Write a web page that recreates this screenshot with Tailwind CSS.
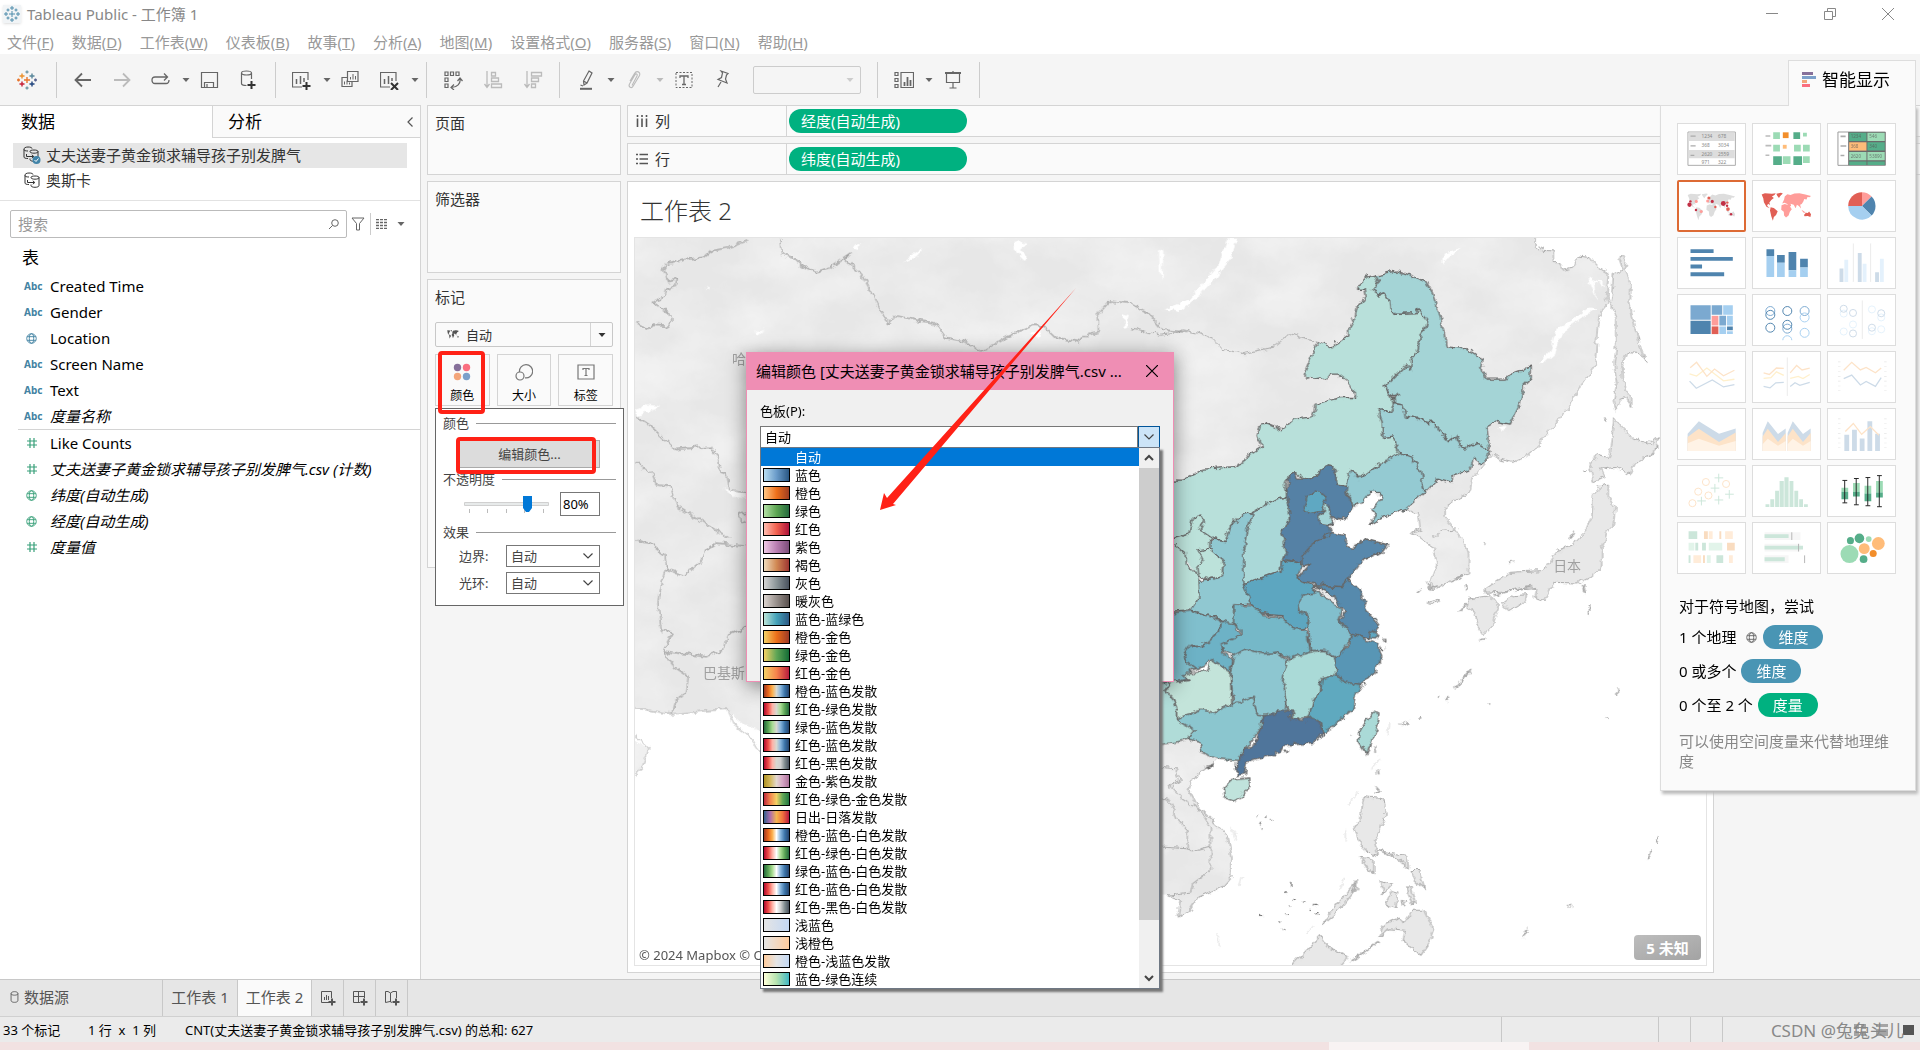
<!DOCTYPE html>
<html lang="zh-CN">
<head>
  <meta charset="UTF-8">
  <title>Tableau Public - 工作簿 1</title>
  <script src="https://cdn.jsdelivr.net/npm/@tailwindcss/browser@4"></script>
</head>
<body class="relative h-screen flex flex-col overflow-hidden bg-[#f5f5f5] text-[15px] leading-5 text-[#333] font-['Noto_Sans','Noto_Sans_CJK_SC',sans-serif]">

  <!-- Shared icons -->
  <svg class="hidden">
    <symbol id="caret" viewBox="0 0 8 8"><path d="M0.500 2h7L4 6z" fill="currentColor"/></symbol>
    <symbol id="chevron" viewBox="0 0 12 12"><path d="M1.500 3.500 6 8l4.500-4.500" fill="none" stroke="currentColor" stroke-width="1.200"/></symbol>
    <symbol id="globe" viewBox="0 0 12 12">
      <g fill="none" stroke="currentColor"><circle cx="6" cy="6" r="5.200"/><ellipse cx="6" cy="6" rx="2.400" ry="5.200"/><path d="M1.200 4h9.600M1.200 8h9.600"/></g>
    </symbol>
    <symbol id="hash" viewBox="0 0 12 12"><path d="M4 1v10M8 1v10M1 4h10M1 8h10" fill="none" stroke="currentColor" stroke-width="1.200"/></symbol>
    <symbol id="source" viewBox="0 0 16 16">
      <g fill="none" stroke="currentColor"><path d="M5 12.500C2.500 12.500 1 12 1 11V3c0-1 1.500-2 4-2s4 .6 4 1.500"/><path d="M1 3.500C1 4.500 2.500 5 5 5"/><path d="M7 5.500C7 4.500 8.500 4 11 4s4 .6 4 1.500v8c0 1-1.500 1.800-4 1.800s-4-.8-4-1.800v-1M7 5.500c0 1 1.500 1.700 4 1.700s4-.7 4-1.700"/><path d="M3.500 8v2.500h7M8.800 8.800l2 1.700-2 1.700"/></g>
    </symbol>
    <symbol id="ticks" viewBox="0 0 207 156"><path d="M34 30v100M178 30v100" stroke="#e6e6e6" stroke-width="8" stroke-dasharray="2 13" fill="none"/></symbol>
    <symbol id="americas" viewBox="0 0 207 156">
      <path d="M26 42l10-4 22 2 12-2-4 6-8 4 6 5-8 6-6 8 2 8-6-4-3 6 8 8-10-5-8-14-2-12zM72 40l14-3 6 2-8 8-4 6-6-8zM54 82l10 2 12 10-5 12-7 6-3 12-5-14-4-18zM158 106l6-7 6 1 4-5 6 9-2 8-8-3-10 1z"/>
    </symbol>
    <symbol id="eurasia" viewBox="0 0 207 156">
      <path d="M92 66l4-8 2-10 8-7 10 3 12-5 16-1 18 4 18 5-5 4-6-1-3 8-7-2-3 8-5 8-5 2 3 12-7-8-6-4-4 11-6-11-10-3 2 6-6 4-6-9-9-4-7 2zM88 76l10-4 14 4 8 12-6 8-4 12-8 6-6-6-1-12-8-6zM150 90l8 4 6 6-8-2z"/>
    </symbol>
  </svg>

  <!-- Title bar -->
  <header class="flex h-7 items-center bg-white text-[#888]">
    <svg class="ml-[3px] mr-1.5 size-[18px] bg-[#f1f4f6] shadow" viewBox="0 0 18 18"><path d="M9 6v6M6 9h6M9 1v4M7 3h4M9 13v4M7 15h4M3 7v4M1 9h4M15 7v4M13 9h4M5 3.500v3M3.500 5h3M13 3.500v3M11.500 5h3M5 11.500v3M3.500 13h3M13 11.500v3M11.500 13h3" stroke="#4f8cab" fill="none"/></svg>
    <h1 class="flex-1">Tableau Public - 工作簿 1</h1>
    <button aria-label="最小化" class="flex w-[58px] justify-center"><svg class="size-3" viewBox="0 0 12 12"><path d="M0 5.500h12" stroke="currentColor"/></svg></button>
    <button aria-label="还原" class="flex w-[58px] justify-center"><svg class="size-3" viewBox="0 0 12 12"><path d="M.5 3.500h8v8h-8zM3.500 3.500v-3h8v8h-3" fill="none" stroke="currentColor"/></svg></button>
    <button aria-label="关闭" class="mr-[3px] flex w-[58px] justify-center"><svg class="size-3" viewBox="0 0 12 12"><path d="M0 0l12 12M12 0L0 12" stroke="currentColor"/></svg></button>
  </header>

  <!-- Menu -->
  <nav class="flex h-[26px] items-center gap-[18px] bg-white pl-[7px] pt-px text-[#999]">
    <a href="#">文件(<u>F</u>)</a>
    <a href="#">数据(<u>D</u>)</a>
    <a href="#">工作表(<u>W</u>)</a>
    <a href="#">仪表板(<u>B</u>)</a>
    <a href="#">故事(<u>T</u>)</a>
    <a href="#">分析(<u>A</u>)</a>
    <a href="#">地图(<u>M</u>)</a>
    <a href="#">设置格式(<u>O</u>)</a>
    <a href="#">服务器(<u>S</u>)</a>
    <a href="#">窗口(<u>N</u>)</a>
    <a href="#">帮助(<u>H</u>)</a>
  </nav>

  <!-- Toolbar -->
  <div class="flex h-[51px] items-center pl-[17px] text-[#666]">
    <button aria-label="起始页"><svg class="size-5" viewBox="0 0 20 20" fill="none" stroke-width="1.400"><path d="M10 7v6M7 10h6" stroke="#e8762d"/><path d="M5 3.500v5M2.500 6h5" stroke="#eb912c"/><path d="M15 3.500v5M12.500 6h5" stroke="#59879b"/><path d="M5 11.500v5M2.500 14h5" stroke="#c72037"/><path d="M15 11.500v5M12.500 14h5" stroke="#1f447e"/><path d="M10 .5v3M8.500 2h3" stroke="#7199a6"/><path d="M10 16.500v3M8.500 18h3" stroke="#7199a6"/><path d="M1.500 8.500v3M0 10h3" stroke="#e8762d"/><path d="M18.500 8.500v3M17 10h3" stroke="#5b6591"/></svg></button>
    <span class="ml-[19px] mr-4 h-9 w-px bg-[#ccc]"></span>
    <div class="flex items-center gap-[19px]">
      <button aria-label="撤消"><svg class="size-5" viewBox="0 0 20 20"><path d="M18 10H3M9 3.500 2.500 10 9 16.500" fill="none" stroke="currentColor" stroke-width="1.800"/></svg></button>
      <button aria-label="重做" class="text-[#bbb]"><svg class="size-5" viewBox="0 0 20 20"><path d="M2 10h15M11 3.500l6.500 6.500-6.500 6.500" fill="none" stroke="currentColor" stroke-width="1.800"/></svg></button>
      <div class="-mr-[9px] flex items-center gap-[11px]">
        <button aria-label="重播"><svg class="size-5" viewBox="0 0 20 20"><path d="M16 7H4c-2 0-3 1-3 3s1 3.500 3 3.500h11c2 0 3-1.200 3-3.500M13 3.500 16.500 7 13 10.500" fill="none" stroke="currentColor" stroke-width="1.300"/></svg></button>
        <button aria-label="更多重播"><svg class="size-2"><use href="#caret"/></svg></button>
      </div>
      <button aria-label="保存"><svg class="size-5" viewBox="0 0 20 20"><path d="M1.500 2.500h16v15h-16zM4.500 17.500v-5h9v5M7 14v3.500" fill="none" stroke="currentColor" stroke-width="1.200"/></svg></button>
      <button aria-label="新建数据源"><svg class="size-5" viewBox="0 0 20 20"><path d="M7.500 15.500c-3.500 0-5-.8-5-2V3c0-1.200 2-2 5-2s5 .8 5 2v6M2.500 3c0 1.200 2 2 5 2s5-.8 5-2" fill="none" stroke="currentColor" stroke-width="1.200"/><path d="M12.500 11v8M8.500 15h8" stroke="#333" stroke-width="2"/></svg></button>
    </div>
    <span class="mx-4 h-9 w-px bg-[#ccc]"></span>
    <div class="flex items-center gap-[19px]">
      <div class="-mr-[9px] flex items-center gap-[11px]">
        <button aria-label="新建工作表"><svg class="size-5" viewBox="0 0 20 20"><path d="M10 17H.5V2.500H16V10" fill="none" stroke="currentColor" stroke-width="1.200"/><path d="M4.500 14V9M8.500 14V6M12 12V8" stroke="currentColor" stroke-width="1.500"/><path d="M14.500 12v8M10.500 16h8" stroke="#333" stroke-width="2"/></svg></button>
        <button aria-label="更多新建选项"><svg class="size-2"><use href="#caret"/></svg></button>
      </div>
      <button aria-label="复制工作表"><svg class="size-5" viewBox="0 0 20 20"><path d="M6.500 1.500H17v10H6.500zM6.500 7.500H1v9h10v-5" fill="none" stroke="currentColor" stroke-width="1.200"/><path d="M9.500 9.500V7M12 9.500V4M14.500 9.500V6M3.500 14.500v-3M6 14.500v-4M8.500 14.500v-2" stroke="currentColor"/></svg></button>
      <div class="-mr-[9px] flex items-center gap-[11px]">
        <button aria-label="清除工作表"><svg class="size-5" viewBox="0 0 20 20"><path d="M10 17H.5V2.500H16V11" fill="none" stroke="currentColor" stroke-width="1.200"/><path d="M4.500 14V9M8.500 14V6M12 11V8" stroke="currentColor" stroke-width="1.500"/><path d="M11 13l7 7M18 13l-7 7" stroke="#333" stroke-width="2"/></svg></button>
        <button aria-label="更多清除选项"><svg class="size-2"><use href="#caret"/></svg></button>
      </div>
    </div>
    <span class="mx-4 h-9 w-px bg-[#ccc]"></span>
    <div class="flex items-center gap-5">
      <button aria-label="交换行和列"><svg class="size-5" viewBox="0 0 20 20" fill="none" stroke="currentColor" stroke-width="1.200"><path d="M2 2h3v3.500H2zM7.500 2h3v3.500h-3zM13 2h3v3.500h-3zM2 8h3v3.500H2zM2 14h3v3.500H2zM17 8.500c1 5-3 9-8.500 9M14.500 11 17 8l2.500 3M11 14.500l-3 3 3 2.500"/></svg></button>
      <button aria-label="升序排序" class="text-[#bbb]"><svg class="size-5" viewBox="0 0 20 20" fill="none" stroke="currentColor" stroke-width="1.300"><path d="M4 1v16M1.500 14 4 17.500 6.500 14M8.500 2.500h4v3.500h-4zM8.500 8h7v3.500h-7zM8.500 14h10v3.500h-10z"/></svg></button>
      <button aria-label="降序排序" class="text-[#bbb]"><svg class="size-5" viewBox="0 0 20 20" fill="none" stroke="currentColor" stroke-width="1.300"><path d="M4 1v16M1.500 14 4 17.500 6.500 14M8.500 2.500h10v3.500h-10zM8.500 8h7v3.500h-7zM8.500 14h4v3.500h-4z"/></svg></button>
    </div>
    <span class="mx-4 h-9 w-px bg-[#ccc]"></span>
    <div class="flex items-center gap-[19px]">
      <div class="-mr-[9px] flex items-center gap-[11px]">
        <button aria-label="突出显示"><svg class="size-5" viewBox="0 0 20 20" fill="none" stroke="currentColor" stroke-width="1.200"><path d="M13 1l3 2-5 10-3 2-.5-4zM7.500 11l3.500 2M4.500 15l2.500 1"/><path d="M4 18.800h12" stroke-width="2"/></svg></button>
        <button aria-label="更多突出显示"><svg class="size-2"><use href="#caret"/></svg></button>
      </div>
      <div class="-mr-[9px] flex items-center gap-[11px] text-[#bbb]">
        <button aria-label="分组"><svg class="size-5" viewBox="0 0 20 20"><path d="M7 15.500 12 6c1-2-1.200-3-2.200-1L4.500 14c-1.500 3 2 5 3.700 2L14.500 5.500c1.500-3.500-3-5.500-5-2L5 11" fill="none" stroke="currentColor" stroke-width="1.100"/></svg></button>
        <button aria-label="更多分组"><svg class="size-2"><use href="#caret"/></svg></button>
      </div>
      <button aria-label="显示标记标签"><svg class="size-5" viewBox="0 0 20 20" fill="none" stroke="currentColor"><path d="M2 2.500h16v15H2z" stroke-dasharray="2 1.500"/><path d="M6 8V6h8v2M10 6v8.500M8 14.500h4" stroke-width="1.300"/></svg></button>
      <button aria-label="固定轴"><svg class="size-5" viewBox="0 0 20 20"><path d="M8 1l7 2.500-1.500 1.500-1 4 1.500 4-9-3.500 3.500-2L9.500 3zM8 12l-3 5" fill="none" stroke="currentColor" stroke-width="1.200"/></svg></button>
    </div>
    <select aria-label="适合" disabled class="ml-5 h-7 w-[108px] appearance-none rounded-xs border border-[#ccc]"></select>
    <svg class="-ml-[15px] mr-[7px] size-2 text-[#ccc]"><use href="#caret"/></svg>
    <span class="mx-4 h-9 w-px bg-[#ccc]"></span>
    <div class="flex items-center gap-[19px]">
      <div class="-mr-[9px] flex items-center gap-[11px]">
        <button aria-label="显示/隐藏卡"><svg class="size-5" viewBox="0 0 20 20" fill="none" stroke="currentColor" stroke-width="1.200"><path d="M1 2.500h3v3H1zM1 8.500h3v3H1zM1 14.500h3v3H1zM7 2.500h12.500v15H7z"/><path d="M10.500 16v-4M13.500 16V7M16.500 16v-6" stroke-width="1.800"/></svg></button>
        <button aria-label="更多卡"><svg class="size-2"><use href="#caret"/></svg></button>
      </div>
      <button aria-label="演示模式"><svg class="size-5" viewBox="0 0 20 20" fill="none" stroke="currentColor" stroke-width="1.200"><path d="M2 3h16" stroke-width="2"/><path d="M3.500 3v9.500h13V3M10 1v2M10 12.500V18M6.500 18h7"/></svg></button>
    </div>
    <span class="mx-4 h-9 w-px bg-[#ccc]"></span>
  </div>

  <main class="flex min-h-0 flex-1">
    <!-- Data pane -->
    <aside class="w-[421px] shrink-0 border-r border-t border-[#d4d4d4] bg-white">
      <div class="flex h-8 text-[17px] leading-6 text-black">
        <button class="w-[212px] pl-[21px] text-left">数据</button>
        <button class="flex flex-1 items-center justify-between border-b border-l border-[#d4d4d4] bg-[#fafafa] pl-[15px] pr-1">分析
          <svg class="size-3 rotate-90 text-[#555]"><use href="#chevron"/></svg></button>
      </div>
      <ul class="mt-[5px] h-[58px] border-b border-[#e2e2e2] pl-[13px]">
        <li class="flex h-[25px] w-[394px] items-center gap-[5px] bg-[#e6e6e6] pb-0.5 pl-2.5">
          <svg class="h-5 w-[18px]" viewBox="0 0 18 20"><use href="#source" width="16" height="16" y="1"/><circle cx="13.500" cy="15" r="4" fill="#4284a8"/><path d="M11.500 15l1.500 1.500 2.500-3" stroke="#fff" fill="none"/></svg>
          丈夫送妻子黄金锁求辅导孩子别发脾气</li>
        <li class="flex h-[25px] items-center gap-[5px] pb-0.5 pl-2.5">
          <svg class="h-4 w-[18px]"><use href="#source"/></svg>奥斯卡</li>
      </ul>
      <div class="mt-[9px] flex h-7 items-center pl-2.5 text-[#666]">
        <label class="flex h-7 w-[337px] items-center rounded-xs border border-[#bbb] px-[7px]">
          <input type="text" placeholder="搜索" aria-label="搜索" class="min-w-0 flex-1 outline-none placeholder:text-[#999]">
          <svg class="size-[10px]" viewBox="0 0 10 10"><circle cx="6" cy="4" r="3.300" fill="none" stroke="currentColor"/><path d="M3.500 6.500 0 10" stroke="currentColor"/></svg>
        </label>
        <button aria-label="筛选" class="ml-1"><svg class="size-[14px]" viewBox="0 0 14 14"><path d="M1 1h12L8.500 6.500V13h-3V6.500z" fill="none" stroke="currentColor"/></svg></button>
        <span class="mx-[5px] h-[22px] w-px bg-[#ccc]"></span>
        <button aria-label="视图" class="flex items-center gap-[9px]">
          <svg class="h-[10px] w-3" viewBox="0 0 12 10"><path d="M0 .5h12M0 3.500h12M0 6.500h12M0 9.500h12" stroke="currentColor" stroke-width="1.300" stroke-dasharray="3 1"/></svg>
          <svg class="size-2"><use href="#caret"/></svg></button>
      </div>
      <h2 class="mt-2 pl-[22px] text-[17px] leading-6 text-black">表</h2>
      <ul class="mt-[3px] text-[15px] leading-[26px] text-black [&>li]:flex [&>li]:items-center">
        <li><span class="w-[50px] pl-6 text-[10px] font-bold text-[#4383a3]">Abc</span>Created Time</li>
        <li><span class="w-[50px] pl-6 text-[10px] font-bold text-[#4383a3]">Abc</span>Gender</li>
        <li><span class="w-[50px] pl-[26px] text-[#4383a3]"><svg class="size-[11px]"><use href="#globe"/></svg></span>Location</li>
        <li><span class="w-[50px] pl-6 text-[10px] font-bold text-[#4383a3]">Abc</span>Screen Name</li>
        <li><span class="w-[50px] pl-6 text-[10px] font-bold text-[#4383a3]">Abc</span>Text</li>
        <li class="italic"><span class="w-[50px] pl-6 text-[10px] font-bold not-italic text-[#4383a3]">Abc</span>度量名称</li>
      </ul>
      <ul class="ml-[18px] border-t border-[#d4d4d4] text-[15px] leading-[26px] text-black [&>li]:flex [&>li]:items-center">
        <li><span class="w-8 pl-2 text-[#39a07a]"><svg class="size-3"><use href="#hash"/></svg></span>Like Counts</li>
        <li class="italic"><span class="w-8 pl-2 text-[#39a07a]"><svg class="size-3"><use href="#hash"/></svg></span>丈夫送妻子黄金锁求辅导孩子别发脾气.csv (计数)</li>
        <li class="italic"><span class="w-8 pl-2 text-[#39a07a]"><svg class="size-[11px]"><use href="#globe"/></svg></span>纬度(自动生成)</li>
        <li class="italic"><span class="w-8 pl-2 text-[#39a07a]"><svg class="size-[11px]"><use href="#globe"/></svg></span>经度(自动生成)</li>
        <li class="italic"><span class="w-8 pl-2 text-[#39a07a]"><svg class="size-3"><use href="#hash"/></svg></span>度量值</li>
      </ul>
    </aside>

    <!-- Cards -->
    <div class="ml-1.5 flex w-[194px] shrink-0 flex-col gap-1.5">
      <section class="h-[70px] border border-[#d4d4d4] bg-[#fafafa] px-[7px] py-[7px]">页面</section>
      <section class="h-[92px] border border-[#d4d4d4] bg-[#fafafa] px-[7px] py-[7px]">筛选器</section>
      <section class="relative h-[289px] border border-[#d4d4d4] bg-[#fafafa] px-[7px] pt-[7px]">
        <h2>标记</h2>
        <button class="mt-[15px] flex h-[25px] w-full items-center rounded-xs border border-[#c8c8c8] text-[13px]">
          <svg class="ml-[11px] mr-[7px] h-[9px] w-3" viewBox="24 36 158 90" preserveAspectRatio="none" fill="#555"><use href="#americas" width="207" height="156"/><use href="#eurasia" width="207" height="156"/></svg>
          <span class="flex-1 text-left">自动</span>
          <span class="flex h-full w-[22px] items-center justify-center border-l border-[#d4d4d4]"><svg class="size-2"><use href="#caret"/></svg></span>
        </button>
        <div class="mt-[7px] grid h-[52px] grid-cols-3 gap-[7px] text-xs">
          <button class="flex flex-col items-center border border-[#d4d4d4] pt-2 text-black">
            <svg class="mb-[7px] size-[18px]" viewBox="0 0 18 18"><circle cx="4.500" cy="4.500" r="3.700" fill="#86709a"/><circle cx="13.500" cy="4.500" r="3.700" fill="#fa6e7f"/><circle cx="4.500" cy="13.500" r="3.700" fill="#f3a57a"/><circle cx="13.500" cy="13.500" r="3.700" fill="#7ca0ca"/></svg>颜色</button>
          <button class="flex flex-col items-center border border-[#d4d4d4] pt-2 text-black">
            <svg class="mb-[7px] size-[18px]" viewBox="0 0 18 18" fill="none" stroke="#777" stroke-width="1.200"><path d="M4.500 9A6.600 6.600 0 1110 14.800"/><circle cx="5" cy="13" r="4"/></svg>大小</button>
          <button class="flex flex-col items-center border border-[#d4d4d4] pt-2 text-black">
            <svg class="mb-[7px] size-[18px]" viewBox="0 0 18 18" fill="none" stroke="#777" stroke-width="1.200"><path d="M1 2h16v14H1zM6 7V5.500h6V7M9 5.500v7M7.500 12.500h3"/></svg>标签</button>
        </div>

        <!-- Colour popup -->
        <form class="absolute left-[7px] top-[128px] z-10 h-[198px] w-[189px] border border-[#666] bg-white px-[7px] pt-1.5 text-[13px] leading-4 text-[#444]">
          <h3 class="flex items-center gap-[7px] after:h-px after:flex-1 after:bg-[#999]">颜色</h3>
          <button type="button" class="ml-4 mt-[9px] block h-7 w-[141px] border border-[#aaa] bg-[#dcdcdc]">编辑颜色...</button>
          <h3 class="mt-[3px] flex items-center gap-[7px] after:h-px after:flex-1 after:bg-[#999]">不透明度</h3>
          <div class="relative ml-[21px] mt-1 flex h-[25px] w-[136px] items-center justify-between">
            <svg class="h-6 w-[85px]" viewBox="0 0 85 24"><path d="M.5 10.500h84v3H.5z" fill="#e7eaea" stroke="#d0d0d0"/><path d="M5.500 17v4M23.500 17v4M42.500 17v4M60.500 17v4M79.500 17v4" stroke="#bbb"/><path d="M59 4h9v12l-3 4h-3l-3-4z" fill="#0078d7"/></svg>
            <input type="range" value="80" aria-label="不透明度" class="absolute left-0 w-[85px] opacity-0">
            <input type="text" value="80%" aria-label="不透明度值" class="h-6 w-10 border border-[#777] px-0.5 text-black">
          </div>
          <h3 class="mt-2 flex items-center gap-[7px] after:h-px after:flex-1 after:bg-[#999]">效果</h3>
          <div class="mt-[5px] flex items-center pl-4">
            <label for="border" class="w-[47px]">边界:</label>
            <select id="border" class="h-[22px] w-[94px] appearance-none border border-[#777] pl-1"><option>自动</option></select>
            <svg class="-ml-[18px] size-3"><use href="#chevron"/></svg>
          </div>
          <div class="mt-[5px] flex items-center pl-4">
            <label for="halo" class="w-[47px]">光环:</label>
            <select id="halo" class="h-[22px] w-[94px] appearance-none border border-[#777] pl-1"><option>自动</option></select>
            <svg class="-ml-[18px] size-3"><use href="#chevron"/></svg>
          </div>
        </form>
        <span class="absolute left-2.5 top-[71px] z-10 h-[63px] w-[47px] rounded border-4 border-[#ff2116]"></span>
        <span class="absolute left-7 top-[157px] z-10 h-[37px] w-[140px] rounded border-4 border-[#ff2116]"></span>
      </section>
    </div>

    <!-- Shelves and view -->
    <div class="ml-1.5 flex min-w-0 flex-1 flex-col">
      <div class="flex h-8 border border-r-0 border-[#d4d4d4] bg-[#fafafa]">
        <div class="flex w-[159px] items-center gap-[7px] border-r border-[#d4d4d4] pl-2">
          <svg class="size-3" viewBox="0 0 12 12"><path d="M1.500 0v2M6 0v2M10.500 0v2M1.500 3.500V12M6 3.500V12M10.500 3.500V12" stroke="#555" stroke-width="1.600"/></svg>列</div>
        <span class="m-0.5 mt-[3px] h-6 w-[178px] rounded-full bg-[#00b180] pl-3 leading-6 text-white">经度(自动生成)</span>
      </div>
      <div class="mt-1.5 flex h-8 border border-r-0 border-[#d4d4d4] bg-[#fafafa]">
        <div class="flex w-[159px] items-center gap-[7px] border-r border-[#d4d4d4] pl-2">
          <svg class="size-3" viewBox="0 0 12 12"><path d="M0 1.500h2M0 6h2M0 10.500h2M3.500 1.500H12M3.500 6H12M3.500 10.500H12" stroke="#555" stroke-width="1.600"/></svg>行</div>
        <span class="m-0.5 mt-[3px] h-6 w-[178px] rounded-full bg-[#00b180] pl-3 leading-6 text-white">纬度(自动生成)</span>
      </div>
      <section class="mb-1.5 mr-[206px] mt-1.5 flex min-h-0 flex-1 flex-col border border-[#d4d4d4] bg-white px-1.5 pb-1.5">
        <h2 class="h-[55px] pl-1.5 pt-[13px] text-2xl leading-8 font-light">工作表 2</h2>
        <div class="relative min-h-0 flex-1 border border-[#e4e4e4]">
          <svg class="h-full w-full" viewBox="634 237 1072 729" preserveAspectRatio="xMinYMin slice">
            <defs>
              <filter id="coast" filterUnits="userSpaceOnUse" x="620" y="225" width="1100" height="750">
                <feTurbulence type="fractalNoise" baseFrequency=".14" numOctaves="3" seed="4"/>
                <feDisplacementMap in="SourceGraphic" scale="7" xChannelSelector="R" yChannelSelector="G"/>
              </filter>
              <filter id="relief" filterUnits="userSpaceOnUse" x="620" y="225" width="1100" height="750" color-interpolation-filters="sRGB">
                <feTurbulence type="fractalNoise" baseFrequency=".012 .02" numOctaves="4" seed="9"/>
                <feColorMatrix values="0 0 0 0 1  0 0 0 0 1  0 0 0 0 1  .9 0 0 0 -.3"/>
                <feComposite in2="SourceGraphic" operator="in"/>
                <feBlend in2="SourceGraphic" mode="normal"/>
              </filter>
            </defs>
            <g filter="url(#coast)" stroke-linejoin="round">
              <!-- land -->
              <g fill="#e7e7e7" filter="url(#relief)">
                <path d="M620 225H1200V730H760L740 722 725 709 665 713 620 706zM620 732l28 17-7 20-21 8z"/>
                <path transform="translate(1160 230) scale(.3333)" d="M-100 0H1130L1125 45 1150 58 1180 60 1180 95 1200 95 1210 118 1240 110 1255 75 1290 80 1310 105 1345 130 1340 200 1345 215 1325 240 1312 290 1305 405 1260 470 1240 510 1200 560 1160 610 1130 650 1090 685 1060 695 1020 685 1000 670 965 710 935 745 930 780 855 830 855 860 885 895 915 940 925 970 925 1030 870 1050 820 1078 810 1050 830 1000 820 950 770 915 750 905 780 895 775 850 745 832 690 850 650 865 635 850 665 800 635 785 600 820 540 865 510 885 520 905 560 950 615 925 680 945 665 965 610 990 565 1045 600 1080 620 1140V1230H-100z"/>
                <path transform="translate(1160 580) scale(.3571 .3333)" d="M-60 400H110L115 515 160 535 150 545 90 595 80 630 105 680 160 735 190 775 200 830 200 890 180 915 105 950 80 990 50 1010 55 960 20 945 -60 945z"/>
              </g>
              <!-- coasts and islands -->
              <g fill="none" stroke="#aaa" stroke-width="3" transform="translate(1160 230) scale(.3333)">
                <path d="M1125 23L1125 45 1150 58 1180 60 1180 95 1200 95 1210 118 1240 110 1255 75 1290 80 1310 105 1345 130 1340 200 1345 215 1325 240 1312 290 1305 405 1260 470 1240 510 1200 560 1160 610 1130 650 1090 685 1060 695 1020 685 1000 670 965 710 935 745 930 780 855 830 855 860 885 895 915 940 925 970 925 1030 870 1050 820 1078 810 1050 830 1000 820 950 770 915 750 905 780 895 775 850 745 832"/>
                <path d="M820 920L840 902 885 898M-90 290 0 313 35 308 70 297 120 308 160 325 185 355 250 368 340 348 390 308 420 320 435 325 470 330"/>
                <path fill="#e8e8e8" d="M1385 72L1400 95 1395 120 1410 150 1408 210 1425 290 1445 360 1460 395 1440 368 1400 365 1385 410 1388 450 1400 480 1415 500 1415 530 1400 500 1380 505 1368 538 1360 510 1370 460 1362 400 1370 340 1370 260 1350 215 1358 160 1360 130 1390 120 1378 85zM1362 560L1385 590 1420 625 1470 638 1495 620 1480 670 1450 680 1425 700 1410 730 1370 710 1320 715 1332 740 1300 755 1290 700 1310 670 1345 680 1355 620zM1320 765L1345 760 1345 795 1365 830 1360 880 1340 905 1325 960 1325 1010 1290 1040 1270 1050 1250 1060 1180 1058 1150 1110 1125 1100 1130 1070 1080 1075 1020 1085 975 1088 975 1075 1050 1025 1140 1020 1160 1005 1190 960 1235 945 1275 905 1295 860 1300 790zM1025 1120L1060 1095 1105 1092 1090 1115 1045 1140zM925 1105L990 1095 1015 1130 1000 1180 970 1212 955 1190 945 1150 920 1130zM807 1114l14-6 14 2-6 8-16 3z"/>
                <path d="M1240 900l-8 15 6 4 8-12M1050 1000l8-12M915 1060l5 20M900 1145l18-25M1275 1060l-5 20M770 1085l10-10M975 935l-4 5M1330 560l8 12M1280 720l-10 2M1495 640l-15 15M800 1050l12 25 20-10M870 1055l40-18M1000 1095l70-20 40-10" stroke-width="5"/>
              </g>
              <g fill="none" stroke="#aaa" stroke-width="3" transform="translate(1160 580) scale(.3571 .3333)">
                <path d="M150 545L90 595 80 630 105 680 160 735 190 775 200 830 200 890 180 915 105 950 80 990 50 1010 55 960 20 945M0 560L40 565 55 600 25 615 60 655 110 690 140 740 140 800 90 815 75 805 0 800M0 655L25 660 45 710 75 750 75 805M140 800L140 870 90 910 85 935 20 945"/>
                <path fill="#e8e8e8" d="M350 1175L400 1120 450 1065 470 1100 525 1125 520 1140 490 1175zM570 648L625 655 632 700 615 750 600 780 610 825 575 815 555 780 542 735 560 720 565 680zM615 1070L625 1030 670 1010 680 1030 705 990 740 990 765 1050 752 1090 730 1125 700 1100 680 1080 685 1050 640 1045zM450 1035L490 975 545 910 550 925 500 990zM700 870L725 870 740 925 715 900zM615 900L650 910 625 940zM650 930L665 935 660 985 630 970zM560 830L598 840 598 880 580 865zM610 810L690 825 695 860 640 820zM690 920l12 0 12 50-10-5zM675 960l18 5-10 12z"/>
                <path d="M895 180l12-2M865 270l-35 50M870 268l-45 55M810 350l-12 10M775 350h6M670 435l25-12M720 412h8M1280 320v20M1250 410h4M920 370h4M1397 770l-5 18M1378 810l-14 30M1145 976h6M1030 1045l-14 28M535 460l2 5M600 495l2 22M610 570l2 12M600 615l16 18M600 635h14M530 1145l60-45 25-20M550 900l-14 40M1200 70v32M1180 10l12 30" stroke="#aaa" stroke-width="5"/>
                <path d="M270 705l2 2M295 707h5M275 735l4-8M280 745h3M310 717h3M368 910v8M345 935h10M370 960h6M360 980h3M275 1005h12M350 1000h8M330 1025h5M400 965h6M430 975h8M415 990h5M345 1045v5M435 1000h8" stroke="#777" stroke-width="4"/>
                <path d="M640 425l-4 35M612 532l-20 35M550 635l-18 38M518 748v36M515 892l-12 40M427 1035l-22 25M162 1062v40M230 885l-8 32M200 742l14 36" stroke="#ccc" stroke-width="2"/>
              </g>
              <!-- borders in the west, partly under the dialog -->
              <g fill="none" stroke="#999" stroke-width="2.500" transform="translate(630 220) scale(.3571 .4847)">
                <path d="M330 40L270 55 225 62 205 75 150 80 100 90 90 100 105 125 130 120 125 135 100 140 95 155 62 168 105 190 112 205 100 218 60 215 50 222 15 210M420 40L425 70 460 78 480 92 520 105 560 95 615 68 600 80 645 110 720 212 740 195 800 205 850 210 880 240 940 250 980 272 1050 240 1130 215 1160 218 1190 240 1260 250 1280 235 1310 230 1310 190 1340 165 1400 170 1450 190 1490 225 1560 230"/>
                <path d="M15 403L50 420 125 472 220 465 245 490 250 520 270 525 275 555 325 560M15 498L60 525 70 545 110 548 130 590 275 655M15 660L50 665 95 690 100 720 150 732 195 705 210 680 240 665 325 672M98 715L80 760 75 790 85 845 118 850 90 888 210 900 262 885 270 855 325 838M90 888L120 920 160 940 155 975 125 990 115 1018M325 600l-22 5 4 20 18-5"/>
                <path stroke="#bbb" d="M12 1005L110 1018 270 1008 290 1040 340 1070 362 1100M12 1060L50 1090 30 1130 12 1145"/>
                <path stroke="none" fill="#fff" d="M12 390l30-12 40 5-20 8-45 12zM255 552l60 8 10 12-40-5zM620 55l25-10-5 12-15 3zM760 85l60-30-20 20zM345 230l30-8-20 14zM1075 40l35 5-20 15 20 15-12 4-22-15zM1480 60l12 0-2 60-8-10zM1380 190l15 5-6 28-6-2zM210 140l8-8-2 12zM1120 235l30-18-5 22z"/>
              </g>
              <path transform="translate(1160 230) scale(.3333)" fill="#fff" d="M205 20L228 20 215 75 165 140 120 190 60 240 15 232 40 225 85 205 120 165 170 110zM850 65l55-15-40 30-15 22zM1140 392l30-30 20-70 40-20 60-42 20 2-60 40-45 35-20 60-30 28zM1015 590l20-5-5 22zM1285 140l40 15 10 12-30-15 5 60z"/>

              <!-- northern provinces -->
              <g stroke="#666" stroke-width="4" transform="translate(1160 230) scale(.3333)">
                <path fill="#b8e0da" d="M-20 747L65 748 130 715 220 708 250 695 270 670 305 648 290 615 300 582 320 580 365 597 400 565 455 558 465 520 500 510 540 500 585 500 585 485 560 450 535 430 510 430 497 447 480 438 440 445 432 425 445 395 472 332 512 348 540 328 565 315 565 290 585 255 590 230 615 205 612 175 592 175 595 160 620 138 645 132 655 150 635 178 655 192 670 185 688 205 690 240 705 250 765 248 775 235 802 268 797 290 780 315 772 365 755 380 750 420 740 402 675 465 695 500 700 525 690 545 652 535 665 570 668 620 700 615 715 665 725 685 650 705 595 742 575 715 565 765 530 760 525 720 505 702 480 715 475 732 430 745 405 725 385 735 375 760 380 800 345 805 310 825 275 845 240 855 210 885 195 930 155 920 118 895 130 870 120 853 95 865 85 910 -20 940z"/>
                <path fill="#a4d4d6" d="M645 132L710 120 740 130 795 152 815 185 835 240 850 300 858 345 900 348 930 362 968 385 965 410 978 445 1035 445 1050 430 1110 408 1110 445 1090 465 1080 520 1050 580 1010 572 980 590 988 660 950 635 910 655 885 615 865 630 835 600 820 575 800 575 770 562 735 555 728 522 700 518 698 500 715 490 695 495 675 465 740 402 750 420 755 380 772 365 780 315 797 290 802 268 775 235 765 248 705 250 690 240 688 205 670 185 655 192 635 178 655 150z"/>
                <path fill="#9fd0d5" d="M700 518L728 522 735 555 770 562 800 575 820 575 835 600 865 630 885 615 910 655 950 635 988 660 980 690 962 700 940 685 930 715 880 735 878 758 830 745 792 785 780 720 755 680 715 665 700 615 668 620 665 570 652 535 690 545z"/>
                <path fill="#94cad2" d="M715 665L755 680 780 720 792 785 740 832 690 850 650 870 630 882 645 850 635 840 665 800 655 785 630 785 610 810 580 825 555 770 570 715 595 742 650 705z"/>
                <path fill="#5581a5" d="M385 735L405 725 410 745 430 745 475 732 480 715 505 702 520 705 530 760 562 768 560 790 580 825 560 855 540 868 520 860 505 840 515 880 505 890 510 905 455 940 425 980 425 998 362 985 378 965 362 900 390 860 378 800z"/>
                <path fill="#a4d4d6" d="M490 815L502 825 515 862 508 885 478 880 478 850 488 845z"/>
                <path fill="#5fa8c2" d="M432 825L440 800 470 780 500 795 490 820 488 838 455 845 435 840z"/>
                <path fill="#5888ac" d="M425 998L425 980 455 940 510 905 555 915 555 945 580 950 615 925 682 942 665 965 610 985 595 1000 565 1045 545 1068 500 1065 470 1062 410 1045 450 1000 430 1005z"/>
                <path fill="#aad8d8" d="M275 845L310 825 345 805 378 800 390 860 362 900 378 965 365 990 362 1020 320 1035 250 1062 250 960 262 900z"/>
                <path fill="#90c8d1" d="M275 845L262 900 250 960 250 1062 272 1120 220 1125 225 1145 240 1150 215 1185 175 1165 90 1138 115 1100 112 1050 145 1045 185 1035 188 990 145 955 145 935 160 925 195 930 210 885 240 855z"/>
                <path fill="#bce2da" d="M-20 940L85 910 95 865 120 853 130 870 118 895 155 920 145 935 145 955 115 960 130 990 112 1010 115 1035 112 1050 115 1100 90 1138 -20 1145zM115 960L145 955 188 990 185 1035 145 1045 115 1035 112 1010 130 990zM42 940l35 30 0 30 35 35"/>
                <path fill="#5da6c0" d="M250 1062L320 1035 362 1020 368 988 425 998 410 1045 460 1065 465 1095 440 1090 425 1110 412 1135 445 1155 445 1190 410 1198 380 1180 365 1155 300 1150 272 1120z"/>
                <path fill="#568aad" d="M460 1065L545 1068 565 1045 600 1080 625 1145 658 1185 632 1215 611 1222 557 1207 536 1170 559 1142 540 1130 525 1100 490 1080z"/>
              </g>
              <!-- southern provinces -->
              <g stroke="#666" stroke-width="4" transform="translate(1160 580) scale(.3571 .3333)">
                <path fill="#82bfcd" d="M430 25L460 45 480 65 505 85 510 90 500 120 535 160 530 180 495 230 460 210 420 210 415 145 415 100 390 95 385 75 400 45 435 40z"/>
                <path fill="#74b8c8" d="M205 72L240 75 255 75 290 105 340 110 370 140 410 150 420 215 385 225 360 235 325 215 290 220 240 205 205 225 175 210 170 190 225 165 225 145 205 130z"/>
                <path fill="#80bfcd" d="M-20 95L40 95 90 90 168 118 165 150 120 195 80 195 65 220 75 245 100 265 80 270 95 290 60 300 -20 310z"/>
                <path fill="#6db2c6" d="M168 118L205 130 225 165 170 190 175 215 200 235 195 275 145 240 100 265 75 245 65 220 80 195 120 195 165 150z"/>
                <path fill="#b0dcd8" d="M-20 310L30 305 12 330 30 345 45 380 45 415 95 450 75 475 45 485 -20 495z"/>
                <path fill="#c3e4da" d="M12 330L30 305 80 300 60 280 130 270 145 240 195 275 200 370 150 395 110 390 45 415 45 380 30 345z"/>
                <path fill="#8bc6cf" d="M45 415L110 390 150 395 200 370 260 350 270 400 290 405 280 445 235 510 215 540 160 535 115 515 110 485 75 475 95 450z"/>
                <path fill="#8dc6d0" d="M205 225L240 205 290 220 325 215 355 240 355 260 340 300 355 330 350 390 320 400 290 405 270 400 260 350 205 370 195 275z"/>
                <path fill="#aadad7" d="M355 240L385 225 425 212 450 210 460 210 495 235 495 280 450 295 445 335 430 360 415 410 375 418 365 400 355 385 350 320 340 300z"/>
                <path fill="#5896b5" d="M535 160L570 172 610 190 620 230 600 270 565 310 515 305 495 280 488 235 530 190z"/>
                <path fill="#5fa8c2" d="M590 150L612 165 600 172 585 170z"/>
                <path fill="#5fa9bf" d="M450 295L495 280 515 305 565 312 545 345 540 385 490 430 455 458 445 420 415 410 430 360 445 335z"/>
                <path fill="#4f749b" d="M290 405L320 400 325 388 375 392 365 412 400 420 425 410 445 420 455 458 430 485 400 490 345 495 335 515 290 530 240 545 235 580 215 585 212 550 235 510 265 490 280 445z"/>
                <path fill="#c0e3dc" d="M200 598L250 592 250 615 225 650 205 662 178 650 176 625z"/>
                <path fill="#aadad7" d="M598 395L615 400 605 445 578 522 555 485 555 460 570 430z"/>
                <path d="M620 200l5 8M630 175v8M615 240v8M605 270v8M345 510l15 2M125 560l25-8M575 310v4" stroke-width="6" fill="none"/>
              </g>
            </g>
            <g fill="#a0a0a0" font-size="14">
              <text x="731" y="363">哈</text>
              <text x="702" y="677">巴基斯</text>
              <text x="1553" y="570">日本</text>
            </g>
          </svg>
          <p class="absolute bottom-0 left-0 bg-white/60 px-1 text-[13px] leading-5 text-[#555]">© 2024 Mapbox © O</p>
          <button class="absolute bottom-[5px] right-[5px] h-[25px] w-[67px] rounded bg-linear-to-br from-[#bdbdbd] to-[#a3a3a3] font-bold text-white">5 未知</button>
        </div>
      </section>
    </div>
  </main>

  <!-- Sheet tabs -->
  <nav class="flex h-[37px] items-stretch border-t border-[#c8c8c8] bg-[#e6e6e6] text-[#555]">
    <button class="flex w-[163px] items-center gap-[5px] border-r border-[#c8c8c8] pb-0.5 pl-2.5"><svg class="h-3 w-[9px]" viewBox="0 0 9 14"><path d="M.5 3v8c0 3 8 3 8 0V3c0-3-8-3-8 0zM.5 3c0 2.500 8 2.500 8 0" fill="none" stroke="currentColor"/></svg>数据源</button>
    <button class="w-[75px] border-r border-[#c8c8c8] pb-0.5">工作表 1</button>
    <button class="w-[74px] border-r border-[#c8c8c8] bg-[#fafafa] pb-0.5">工作表 2</button>
    <button aria-label="新建工作表" class="flex w-8 items-center justify-center border-r border-[#c8c8c8]"><svg class="size-4" viewBox="0 0 16 16"><path d="M9 12.500H1.500v-11h10V8M4.500 10V7M6.500 10V5M8.500 10V6" fill="none" stroke="currentColor"/><path d="M12 8.500v7M8.500 12h7" stroke="currentColor" stroke-width="2"/></svg></button>
    <button aria-label="新建仪表板" class="flex w-8 items-center justify-center border-r border-[#c8c8c8]"><svg class="size-4" viewBox="0 0 16 16"><path d="M8 12.500H1.500v-11h11V8M6.500 1.500v11M1.500 6.500h11" fill="none" stroke="currentColor"/><path d="M12 8.500v7M8.500 12h7" stroke="currentColor" stroke-width="2"/></svg></button>
    <button aria-label="新建故事" class="flex w-8 items-center justify-center border-r border-[#c8c8c8]"><svg class="size-4" viewBox="0 0 16 16"><path d="M8 12.500l-2-1-4.500 1v-11H4L6.500 3 9 1.500h3.500V8M6.500 3v9" fill="none" stroke="currentColor"/><path d="M12 8.500v7M8.500 12h7" stroke="currentColor" stroke-width="2"/></svg></button>
  </nav>

  <!-- Status bar -->
  <footer class="relative flex h-[26px] items-center border-t border-[#d0d0d0] bg-[#ebebeb] pl-[3px] text-[13px] text-black">
    <span class="w-[85px]">33 个标记</span>
    <span class="w-[97px]">1 行&nbsp; x &nbsp;1 列</span>
    <span class="flex-1">CNT(丈夫送妻子黄金锁求辅导孩子别发脾气.csv) 的总和: 627</span>
    <span class="h-full w-[157px] border-l border-[#c8c8c8]"></span>
    <span class="h-full w-8 border-l border-[#c8c8c8]"></span>
    <span class="h-full w-[32px] border-l border-[#c8c8c8]"></span>
    <span class="flex h-full w-[198px] items-center justify-end border-l border-[#c8c8c8] pr-1.5 text-[#777]">
      <svg class="h-3 w-[60px]" viewBox="0 0 60 12" fill="currentColor"><path d="M0 0h5v5H0zM7 0h5v5H7zM0 7h5v5H0zM7 7h5v5H7zM22 0h12v3H22zM22 5h12v7H22z" opacity=".6"/><path d="M49 1h11v10H49z" fill="#555"/></svg>
    </span>
    <span class="absolute right-4 top-1 text-[17px] text-[#888]">CSDN @兔兔头儿</span>
  </footer>
  <div class="h-2 bg-[#f2e2e2] pl-[1329px]"><div class="h-2 w-[200px] bg-[#f8f3f3]"></div></div>

  <!-- Show Me -->
  <aside class="absolute right-1 top-[60px] z-10 w-64">
    <button class="relative z-10 ml-auto flex h-[46px] w-[128px] items-center gap-1.5 border border-b-0 border-[#ddd] bg-[#fafafa] pb-[7px] pl-[13px] text-[17px] text-black">
      <svg class="h-4 w-3.5" viewBox="0 0 14 16"><path d="M0 0h11v3H0z" fill="#86709a"/><path d="M0 4h14v3H0z" fill="#7ca0ca"/><path d="M0 8h5v3H0z" fill="#f3a57a"/><path d="M0 12h8v3H0z" fill="#fa6e7f"/></svg>
      智能显示</button>
    <div class="-mt-px h-[686px] border border-[#ddd] bg-[#fafafa] px-4 pt-[17px] text-black shadow-[2px_3px_3px_#bbb]">
      <div class="grid w-[219px] grid-cols-3 gap-x-1.5 gap-y-[5px] [&>button]:h-[52px] [&>button]:border [&>button]:border-[#ddd] [&>button]:bg-white [&_svg]:h-full [&_svg]:w-full">
        <button aria-label="文本表"><svg viewBox="0 0 207 156"><path d="M30 25h148v104H30z" fill="#fff" stroke="#aaa" stroke-width="3"/><path d="M32 27h144v26H32zM32 81h144v26H32z" fill="#ddd"/><path d="M38 36h16v4H38zM38 66h16v4H38zM38 96h12v4H38z" fill="#aaa"/><g font-size="15" fill="#888"><text x="72" y="45">1234</text><text x="124" y="45">678</text><text x="72" y="73">368</text><text x="124" y="73">3034</text><text x="72" y="100">2620</text><text x="124" y="100">2559</text><text x="72" y="124">971</text><text x="124" y="124">322</text></g></svg></button>
        <button aria-label="压力图"><svg viewBox="0 0 207 156"><path d="M62 26h21v21H62zM155 27h12v12h-12zM62 65h21v21H62zM127 65h21v21h-21zM155 65h21v21h-21zM92 101h24v24H92zM155 101h21v21h-21z" fill="#9cdbb5"/><path d="M125 26h21v21h-21zM62 101h27v27H62zM125 101h27v27h-27z" fill="#55ad89"/><path d="M92 26h18v18H92z" fill="#f28e2b"/><path d="M92 65h12v12H92z" fill="#ffbc79"/><path d="M38 35h15v5H38zM38 65h18v5H38zM38 95h12v5H38z" fill="#bbb"/></svg></button>
        <button aria-label="突出显示表"><svg viewBox="0 0 207 156"><path d="M30 25h148v104H30z" fill="#fff" stroke="#999" stroke-width="3"/><path d="M62 25h116v104H62z" fill="#6a6a6a"/><path d="M65 27h54v26H65zM122 57h54v26h-54zM65 117h54v11H65zM122 117h54v11h-54z" fill="#55ad89"/><path d="M122 27h54v26h-54zM65 87h54v26H65zM122 87h54v26h-54z" fill="#9cdbb5"/><path d="M65 57h54v26H65z" fill="#ffbc79"/><path d="M38 36h16v5H38zM38 66h18v5H38zM38 96h12v5H38z" fill="#aaa"/><g font-size="14" fill="#555" opacity=".7"><text x="70" y="45">1234</text><text x="128" y="45">546</text><text x="70" y="75">368</text><text x="128" y="75">340</text><text x="70" y="105">2620</text><text x="128" y="105">53890</text></g></svg></button>
        <button aria-label="符号地图" class="rounded-xs !border-2 !border-[#dd6a34]"><svg viewBox="0 0 207 156"><g fill="#ddd"><use href="#americas"/><use href="#eurasia"/></g><g fill="#c22f45"><circle cx="32" cy="74" r="7"/><circle cx="35" cy="63" r="4"/><circle cx="53" cy="91" r="4"/><circle cx="106" cy="63" r="5"/><circle cx="142" cy="70" r="8"/><circle cx="154" cy="77" r="4"/><circle cx="167" cy="105" r="4"/></g><g fill="#e15f55"><circle cx="95" cy="52" r="5"/><circle cx="116" cy="81" r="4"/><circle cx="155" cy="67" r="4"/><circle cx="157" cy="88" r="6"/></g><g fill="#ff9d9a"><circle cx="54" cy="63" r="5"/><circle cx="70" cy="96" r="5"/><circle cx="91" cy="62" r="5"/></g></svg></button>
        <button aria-label="地图"><svg viewBox="0 0 207 156"><use href="#americas" fill="#e15f55"/><use href="#eurasia" fill="#ff9d9a"/></svg></button>
        <button aria-label="饼图"><svg viewBox="0 0 207 156"><path d="M105 78V35a43 43 0 0130 13z" fill="#ff9d9a"/><path d="M105 78l30-30a43 43 0 010 60z" fill="#4f84ae"/><path d="M105 78l30 30A43 43 0 0162 78z" fill="#a5cff0"/><path d="M105 78H62a43 43 0 0143-43z" fill="#e15f55"/></svg></button>
        <button aria-label="水平条"><svg viewBox="0 0 207 156"><path d="M38 35h72v12H38zM38 59h132v12H38zM38 83h36v12H38zM38 107h105v12H38z" fill="#4f84ae"/></svg></button>
        <button aria-label="堆叠条"><svg viewBox="0 0 207 156"><path d="M41 35h24v21H41zM74 53h24v24H74zM110 44h24v57h-24zM146 65h24v27h-24z" fill="#4f84ae"/><path d="M41 56h24v66H41zM74 77h24v45H74zM110 101h24v21h-24zM146 92h24v30h-24z" fill="#a5cff0"/></svg></button>
        <button aria-label="并排条"><svg viewBox="0 0 207 156"><path d="M35 95h12v42H35zM92 47h12v90H92zM146 107h12v30h-12z" fill="#cddbe8"/><path d="M50 68h12v69H50zM107 80h12v57h-12zM161 65h12v72h-12z" fill="#e4f1fc"/><path d="M78 17v120M132 17v120" stroke="#eaeaea" stroke-width="3"/></svg></button>
        <button aria-label="树状图"><svg viewBox="0 0 207 156"><path d="M38 32h63v45H38zM104 32h33v30h-33zM128 65h21v30h-21z" fill="#7ba9d0"/><path d="M38 80h63v42H38zM152 98h18v12h-18z" fill="#4f84ae"/><path d="M140 32h30v30h-30zM152 65h18v30h-18zM128 98h21v24h-21zM152 113h18v9h-18z" fill="#a5cff0"/><path d="M104 65h21v30h-21z" fill="#ff9d9a"/><path d="M104 98h21v24h-21z" fill="#e15f55"/></svg></button>
        <button aria-label="圆视图"><svg viewBox="0 0 207 156" fill="none" stroke-width="3"><g stroke="#a5cff0"><circle cx="160" cy="70" r="14"/><circle cx="160" cy="118" r="14"/><path d="M92 141a14 14 0 0128 0"/></g><g stroke="#7ba9d0"><circle cx="53" cy="50" r="14"/><circle cx="106" cy="105" r="14"/><circle cx="160" cy="50" r="14"/></g><g stroke="#4f84ae"><circle cx="53" cy="62" r="14"/><circle cx="53" cy="102" r="14"/><circle cx="106" cy="50" r="14"/><circle cx="106" cy="93" r="14"/></g></svg></button>
        <button aria-label="并排圆"><svg viewBox="0 0 207 156" fill="none" stroke-width="3"><g stroke="#e4f1fc"><circle cx="48" cy="58" r="11"/><circle cx="77" cy="92" r="11"/><circle cx="48" cy="114" r="11"/><circle cx="136" cy="45" r="11"/><circle cx="165" cy="70" r="11"/><circle cx="136" cy="113" r="11"/><circle cx="165" cy="107" r="11"/></g><g stroke="#cddbe8"><circle cx="48" cy="43" r="11"/><circle cx="77" cy="56" r="11"/><circle cx="77" cy="120" r="11"/><circle cx="165" cy="57" r="11"/><circle cx="136" cy="102" r="11"/></g><path d="M106 17v120" stroke="#eaeaea"/></svg></button>
        <button aria-label="线(连续)"><svg viewBox="0 0 207 156" fill="none" stroke-width="4"><path d="M35 68L57 75 89 50 141 90 175 85" stroke="#fff0cc"/><path d="M37 49L57 32 89 76 113 53 141 74 175 57" stroke="#fde3c8"/><path d="M35 91L56 113 106 87 141 109 175 102" stroke="#cddbe8"/></svg></button>
        <button aria-label="线(离散)"><svg viewBox="0 0 207 156" fill="none" stroke-width="4"><path d="M32 82L55 80 72 62 95 73M115 82L140 76 155 83 176 70" stroke="#fff0cc"/><path d="M32 65L50 70 72 50 95 51M115 65L135 42 152 56 176 50" stroke="#fde3c8"/><path d="M32 107L52 112 70 96 95 95M115 108L130 96 145 104 176 95" stroke="#cddbe8"/><path d="M106 17v120" stroke="#eaeaea" stroke-width="3"/></svg></button>
        <button aria-label="双线"><svg viewBox="0 0 207 156" fill="none" stroke-width="4"><use href="#ticks"/><path d="M48 57L73 32 100 56 118 48 147 65 165 50" stroke="#fde3c8"/><path d="M48 83L73 72 100 103 118 92 147 107 165 80" stroke="#cddbe8"/></svg></button>
        <button aria-label="区域图(连续)"><svg viewBox="0 0 207 156"><path d="M29 77L64 38 127 77 179 61V131H29z" fill="#cddbe8"/><path d="M29 87L64 62 127 103 179 73V131H29z" fill="#fde3c8"/><path d="M29 107L64 93 127 115 179 100V131H29z" fill="#fff3e6"/></svg></button>
        <button aria-label="区域图(离散)"><svg viewBox="0 0 207 156"><path d="M29 75L45 38 77 78 101 61V131H29zM107 75L123 38 155 78 179 61V131H107z" fill="#cddbe8"/><path d="M29 86L45 62 77 103 101 75V131H29zM107 86L123 62 155 103 179 75V131H107z" fill="#fde3c8"/><path d="M29 110L45 93 77 115 101 100V131H29zM107 110L123 93 155 115 179 100V131H107z" fill="#fff3e6"/></svg></button>
        <button aria-label="双组合"><svg viewBox="0 0 207 156"><use href="#ticks"/><path d="M50 80h15v51H50zM74 65h15v66H74zM98 92h15v39H98zM122 38h15v93h-15zM146 77h15v54h-15z" fill="#cddbe8"/><path d="M53 70L78 45 104 79 131 55 158 82" fill="none" stroke="#fde3c8" stroke-width="4"/></svg></button>
        <button aria-label="散点图"><svg viewBox="0 0 207 156" fill="none" stroke-width="3"><g stroke="#fde3c8"><circle cx="44" cy="116" r="11"/><circle cx="62" cy="80" r="11"/><circle cx="86" cy="50" r="11"/><circle cx="94" cy="92" r="11"/><circle cx="149" cy="56" r="11"/></g><path d="M59 109h27M72 96v27M101 69h27M114 56v27M113 37h27M126 24v27M113 106h27M126 93v27M146 88h27M159 75v27" stroke="#cce6da"/></svg></button>
        <button aria-label="直方图"><svg viewBox="0 0 207 156"><path d="M38 119h12v9H38zM53 104h12v24H53zM68 77h12v51H68zM82 47h13v81H82zM97 35h13v93H97zM113 47h12v81h-12zM128 77h12v51h-12zM143 104h12v24h-12zM158 119h12v9h-12z" fill="#cce6da"/></svg></button>
        <button aria-label="盒须图"><svg viewBox="0 0 207 156"><path d="M41 68h21v12H41zM77 53h21v27H77zM113 62h21v24h-21zM149 47h21v36h-21z" fill="#9cdbb5"/><path d="M41 80h21v24H41zM77 80h21v15H77zM113 86h21v24h-21zM149 83h21v15h-21z" fill="#55ad89"/><path d="M44 45h15M51 45v70M44 115h15M80 39h15M87 39v82M80 121h15M116 36h15M123 36v88M116 124h15M152 30h15M159 30v97M152 127h15" stroke="#222" stroke-width="3"/></svg></button>
        <button aria-label="甘特图"><svg viewBox="0 0 207 156"><path d="M32 26h27v24H32zM53 62h9v24h-9zM74 62h12v24H74zM32 101h6v24h-6zM119 101h21v24h-21z" fill="#cce6da"/><path d="M32 62h18v24H32zM95 62h42v24H95zM89 101h12v24H89z" fill="#e2f4ea"/><path d="M80 26h12v24H80zM128 26h6v24h-6zM152 62h24v24h-24zM77 101h6v24h-6z" fill="#f9dcc0"/><path d="M95 26h12v24H95zM146 26h24v24h-24zM47 101h24v24H47zM158 101h12v24h-12z" fill="#ffecd9"/></svg></button>
        <button aria-label="靶心图"><svg viewBox="0 0 207 156"><path d="M35 29h112v24H35zM35 65h112v24H35zM35 101h75v24H35z" fill="#f6f6f6"/><path d="M35 35h75v12H35zM35 71h120v12H35zM35 107h63v12H35z" fill="#cce6da"/><path d="M120 29v24M141 65v24M160 101v24" stroke="#b5b5b5" stroke-width="3"/></svg></button>
        <button aria-label="填充气泡图"><svg viewBox="0 0 207 156"><circle cx="66" cy="97" r="28" fill="#9cdbb5"/><circle cx="126" cy="50" r="9" fill="#9cdbb5"/><g fill="#55ad89"><circle cx="69" cy="55" r="11"/><circle cx="97" cy="48" r="15"/><circle cx="110" cy="113" r="12"/></g><circle cx="156" cy="64" r="20" fill="#ffbc79"/><circle cx="112" cy="80" r="17" fill="#ffbc79"/><circle cx="140" cy="95" r="11" fill="#f28e2b"/></svg></button>
      </div>
      <div class="mt-[22px] w-[220px] pl-0.5">
        <p>对于符号地图，尝试</p>
        <p class="mt-[9px] flex h-6 items-center">1 个地理<svg class="ml-2.5 mr-1.5 size-[11px] text-[#666]"><use href="#globe"/></svg><span class="h-6 w-[60px] rounded-full bg-[#4995b4] text-center leading-6 text-white">维度</span></p>
        <p class="mt-2.5 flex h-6 items-center gap-[5px]">0 或多个<span class="h-6 w-[60px] rounded-full bg-[#4995b4] text-center leading-6 text-white">维度</span></p>
        <p class="mt-2.5 flex h-6 items-center gap-[5px]">0 个至 2 个<span class="h-6 w-[60px] rounded-full bg-[#00b180] text-center leading-6 text-white">度量</span></p>
        <p class="mt-[14px] text-[#888]">可以使用空间度量来代替地理维度</p>
      </div>
    </div>
  </aside>

  <!-- Edit colours dialog -->
  <section role="dialog" aria-labelledby="dialog-title" class="absolute left-[746px] top-[352px] z-20 h-[330px] w-[428px] border border-[#ef8eb4] bg-[#f0f0f0] text-black shadow-[0_4px_18px_rgba(0,0,0,0.45)]">
    <header class="flex h-[37px] items-center justify-between bg-[#ef8eb4] pb-px pl-[9px] pr-[15px]">
      <h2 id="dialog-title" class="whitespace-nowrap">编辑颜色 [丈夫送妻子黄金锁求辅导孩子别发脾气.csv ...</h2>
      <button aria-label="关闭"><svg class="size-3" viewBox="0 0 12 12"><path d="M0 0l12 12M12 0L0 12" stroke="#000" stroke-width="1.200"/></svg></button>
    </header>
    <div class="relative px-[13px] pt-[11px] text-[13px]">
      <label for="palette" class="block">色板(P):</label>
      <div class="mt-[5px] flex h-[22px] w-[400px]">
        <select id="palette" class="min-w-0 flex-1 appearance-none border border-[#777] bg-white pl-1"><option>自动</option></select>
        <button aria-label="打开列表" class="flex w-[22px] items-center justify-center border border-[#005499] bg-[#cce4f7] text-[#444]"><svg class="size-3"><use href="#chevron"/></svg></button>
      </div>
      <div class="absolute left-[13px] top-[57px] flex w-[400px] border border-[#6f7884] bg-white shadow-[3px_3px_2px_#777]">
        <ul id="palette-list" role="listbox" aria-label="色板" class="flex-1"></ul>
        <div class="flex w-5 flex-col items-center bg-[#f0f0f0] text-[#444]">
          <svg class="my-1 size-3" viewBox="0 0 12 12"><path d="M2 8l4-4 4 4" fill="none" stroke="currentColor" stroke-width="2"/></svg>
          <span class="h-[452px] w-5 bg-[#cdcdcd]"></span>
          <svg class="mb-1 mt-auto size-3" viewBox="0 0 12 12"><path d="M2 4l4 4 4-4" fill="none" stroke="currentColor" stroke-width="2"/></svg>
        </div>
      </div>
    </div>
  </section>

  <!-- Pointer arrow -->
  <svg class="pointer-events-none absolute left-[878px] top-[286px] z-30 h-[226px] w-[200px]" viewBox="878 286 200 226"><path d="M880 510l4-17 3 5L1076 288 893 504l3 1z" fill="#ff2116"/></svg>

  <script>
    const blue = ["#26456e", "#3a73a8", "#86b4dc"];
    const orange = ["#9e3a26", "#e9661b", "#fbb04e"];
    const green = ["#24693d", "#5aa455", "#a8dc92"];
    const red = ["#b10b32", "#ee4b46", "#ffb2a6"];
    const black = ["#49525e", "#7f8b8e", "#cfcfcf"];
    const back = (colors) => [...colors].reverse();

    const palettes = [
      ["自动", null],
      ["蓝色", ["#b9ddf1", "#6a9bc9", "#2a5783"]],
      ["橙色", ["#ffc685", "#ee701b", "#9e3d22"]],
      ["绿色", ["#b3e0a6", "#5ea654", "#24693d"]],
      ["红色", ["#ffbeb2", "#f26250", "#ae123a"]],
      ["紫色", ["#eec9e5", "#bb7fb2", "#7c4d79"]],
      ["褐色", ["#eedbbd", "#d18954", "#9f3632"]],
      ["灰色", ["#d5d5d5", "#8b9598", "#49525e"]],
      ["暖灰色", ["#dcd4d0", "#98908c", "#59504e"]],
      ["蓝色-蓝绿色", ["#bce4d8", "#45a2b9", "#2c5985"]],
      ["橙色-金色", ["#f4d166", "#ec701a", "#9e3a26"]],
      ["绿色-金色", ["#f4d166", "#60a656", "#146c36"]],
      ["红色-金色", ["#f4d166", "#f6834c", "#b71d3e"]],
      ["橙色-蓝色发散", [...orange, "#d8d8d0 50%", ...back(blue)]],
      ["红色-绿色发散", [...red, "#d8d8d0 50%", ...back(green)]],
      ["绿色-蓝色发散", [...green, "#d8d8d0 50%", ...back(blue)]],
      ["红色-蓝色发散", [...red, "#d8d8d0 50%", ...back(blue)]],
      ["红色-黑色发散", [...red, "#d8d8d0 50%", ...back(black)]],
      ["金色-紫色发散", ["#ad9024", "#d3b85c", "#e3d8cf", "#d4a3c3", "#ac7299"]],
      ["红色-绿色-金色发散", ["#be2a3e", "#f4864e", "#f4d166", "#60a656", "#22763f"]],
      ["日出-日落发散", ["#33608c", "#b06dad", "#f5b54f", "#f0703e", "#b81840"]],
      ["橙色-蓝色-白色发散", [...orange, "#fff", ...back(blue)]],
      ["红色-绿色-白色发散", [...red, "#fff", ...back(green)]],
      ["绿色-蓝色-白色发散", [...green, "#fff", ...back(blue)]],
      ["红色-蓝色-白色发散", [...red, "#fff", ...back(blue)]],
      ["红色-黑色-白色发散", [...red, "#fff", ...back(black)]],
      ["浅蓝色", ["#e5e5e5", "#c4d8f3"]],
      ["浅橙色", ["#e5e5e5", "#ffcc9e"]],
      ["橙色-浅蓝色发散", ["#ffcc9e", "#e5e5e5", "#c4d8f3"]],
      ["蓝色-绿色连续", ["#feffd9", "#b5e3b0", "#41b7c4"]],
    ];

    document.getElementById("palette-list").innerHTML = palettes.map(([name, colors]) => colors
      ? `<li role="option" class="flex h-[18px] items-center gap-[5px] pl-0.5 leading-[18px]">
           <span class="h-3.5 w-[27px] border border-black" style="background: linear-gradient(90deg, ${colors.join(", ")})"></span>${name}</li>`
      : `<li role="option" aria-selected="true" class="h-[18px] bg-[#0078d7] pl-[34px] leading-[18px] text-white">${name}</li>`
    ).join("");
  </script>
</body>
</html>
